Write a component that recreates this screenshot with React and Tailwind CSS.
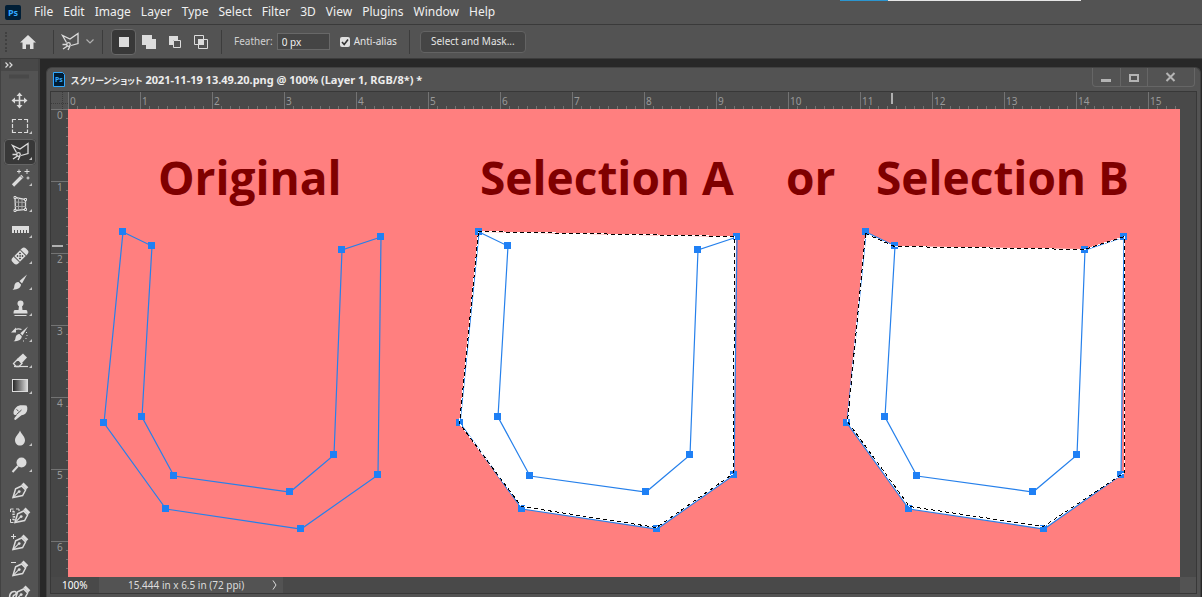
import React from 'react';

const UI_FONT = "font-['Noto_Sans','Open_Sans','Noto_Sans_CJK_JP',sans-serif]";

const MENUS = ['File', 'Edit', 'Image', 'Layer', 'Type', 'Select', 'Filter', '3D', 'View', 'Plugins', 'Window', 'Help'];

function LassoShape() {
  return (
    <g fill="none" stroke="#dcdcdc" strokeWidth="1.3">
      <path d="M12.5 13.500 8.500 6.500 16 10l8-5.500V14.500L17 16.500" />
      <circle cx="14.500" cy="15.500" r="1.800" />
      <path d="M13 15.500H8.500M13.500 17l-4.500 3M16 17l-2 4" />
    </g>
  );
}

function Pen({ x = 0, y = 0 }) {
  return (
    <g transform={`translate(${x} ${y})`}>
      <path d="M9 20.5l2.6-8.6 6-2.9 4 4-3 5.6z" fill="none" stroke="#dcdcdc" strokeWidth="1.5" />
      <path d="M9 20.5l5.6-5.6" stroke="#dcdcdc" strokeWidth="1.1" />
      <circle cx="15.2" cy="14.6" r="1.4" fill="#dcdcdc" />
      <path d="M17.4 7.8l2.2-2.2 4.7 4.6-2.2 2.4z" fill="#dcdcdc" />
    </g>
  );
}

const TOOLS = [
  {
    name: 'Move',
    icon: (
      <g>
        <path d="M15.500 8v11M10 13.500h11" stroke="#dcdcdc" strokeWidth="1.6" />
        <path d="M15.500 5.500l3 3.500h-6zM15.500 21.500l3-3.500h-6zM7.500 13.500l3.500-3v6zM23.500 13.500l-3.500-3v6z" fill="#dcdcdc" />
      </g>
    ),
  },
  {
    name: 'Rectangular Marquee',
    more: true,
    icon: <path d="M8.5 9.500V6.500h3.500M14 6.500h4M20 6.500h3.500V9.500M23.500 11v4M23.500 16.500v3H20M18 19.500h-4M12 19.500H8.500v-3M8.500 15v-4" fill="none" stroke="#dcdcdc" strokeWidth="1.2" />,
  },
  { name: 'Polygonal Lasso', more: true, active: true, icon: <LassoShape /> },
  {
    name: 'Magic Wand',
    more: true,
    icon: (
      <g>
        <path d="M9 20.500L18.500 11" stroke="#dcdcdc" strokeWidth="3.200" />
        <path d="M16.500 11l2.200 2.200" stroke="#535353" strokeWidth="0.800" />
        <path d="M15 4.500v4M13 6.500h4M23 4v5M20.500 6.500h5M24 11.500v3M22.500 13h3" stroke="#dcdcdc" />
      </g>
    ),
  },
  {
    name: 'Perspective Crop',
    more: true,
    icon: (
      <g fill="none" stroke="#dcdcdc">
        <path d="M11 6.500l10.500 2v10L11.500 19.500z" strokeWidth="1.300" />
        <path d="M14.500 7v12M18 8v11M11 11l10.500.5M11 15.500h10.500" stroke="#a5a5a5" />
        <path d="M10 5.500h2v2h-2zM20.500 7.500h2v2h-2zM10 18.500h2v2h-2zM20.500 17.500h2v2h-2z" fill="#535353" />
      </g>
    ),
  },
  { name: 'Ruler', more: true, icon: <path d="M8 9h17v7h-2v-3h-1v3h-2v-3h-1v3h-2v-3h-1v3h-2v-3h-1v3h-2v-3h-1v3H8z" fill="#dcdcdc" /> },
  {
    name: 'Healing Brush',
    more: true,
    icon: (
      <g transform="rotate(-45 16 13)">
        <rect x="6.500" y="9" width="19" height="8" rx="3" fill="#dcdcdc" />
        <path d="M11.500 9v8M20.500 9v8" stroke="#535353" />
        <path d="M13.500 10.500h1.500v1.500h-1.500zM17 10.500h1.500v1.500H17zM15.300 12.300h1.500v1.500h-1.500zM13.500 14h1.500v1.500h-1.500zM17 14h1.500v1.500H17z" fill="#333" />
      </g>
    ),
  },
  {
    name: 'Brush',
    more: true,
    icon: <path d="M23 5.500l-5 9-2.500-2.500zM14.500 13l2.500 2.500c0 3-3.500 5.500-8.500 5.200 2-1 1.500-2.500 2-4.700.5-2 2.300-3.200 4-3z" fill="#dcdcdc" />,
  },
  {
    name: 'Clone Stamp',
    more: true,
    icon: (
      <g fill="#dcdcdc">
        <circle cx="16.500" cy="8.500" r="3" />
        <path d="M15 10.500h3l.5 4.500H22c1 0 1.500 1 1.500 3.500h-14C9.500 16 10 15 11 15h3.500zM10.500 20h12v1h-12z" />
      </g>
    ),
  },
  {
    name: 'History Brush',
    more: true,
    icon: (
      <g fill="#dcdcdc">
        <path d="M24 5.500l-5.500 9-2.200-2.200zM15.500 13l2.300 2.300c0 3-3 5-8.300 5 2-1 1.700-2.300 2.200-4.300.4-1.800 2-3.200 3.800-3z" />
        <path d="M7 11.500L12 6.500v5z" />
        <path d="M11 8.500c3-1 4-1 6.500 0" fill="none" stroke="#dcdcdc" strokeWidth="1.300" />
        <path d="M22 11h1v1h-1zM22.500 14h1v1h-1zM21.500 17h1v1h-1zM19 19.500h1v1h-1z" />
      </g>
    ),
  },
  {
    name: 'Eraser',
    more: true,
    icon: (
      <g>
        <path d="M13.500 11.500L19 6.500l4 4-5.500 6z" fill="#dcdcdc" />
        <path d="M14 12l-4.500 4.500 2.500 3h3l3-3z" fill="none" stroke="#dcdcdc" strokeWidth="1.300" />
        <path d="M10 19.500h14" stroke="#dcdcdc" strokeWidth="1.200" />
      </g>
    ),
  },
  { name: 'Gradient', more: true, icon: <rect x="8.500" y="6.500" width="15" height="12" fill="url(#tool-gradient)" stroke="#dcdcdc" /> },
  {
    name: 'Smudge',
    icon: (
      <g>
        <path d="M12 8.500C15 5.500 18 6.500 22.500 6.500c1.500 2 1 6-1 8-1.500 1.500-2.500 1-4 1.800L11.500 21c-1.500 0-1.500-1.500-.8-2.200l2.300-3c-2 .8-3.500 0-3.500-1.800 0-2.500 1-4 2.500-5.500z" fill="#dcdcdc" />
        <path d="M12.500 15.500l5-4.500M14.500 12l-2-1.500" stroke="#535353" fill="none" />
      </g>
    ),
  },
  { name: 'Blur', more: true, icon: <path d="M16 5.500c1.500 4 5 6 5 9.700 0 3-2.200 5.300-5 5.300s-5-2.300-5-5.300c0-3.700 3.500-5.700 5-9.700z" fill="#dcdcdc" /> },
  {
    name: 'Dodge',
    more: true,
    icon: (
      <g>
        <circle cx="17.500" cy="11.500" r="5" fill="#dcdcdc" />
        <path d="M14 15l-5.500 6" stroke="#dcdcdc" strokeWidth="2" />
      </g>
    ),
  },
  { name: 'Pen', icon: <Pen /> },
  {
    name: 'Content-Aware Tracing',
    icon: (
      <g>
        <Pen x={2} y={-1} />
        <path d="M6.500 9V6h3M12 6h3v2M6.500 16v3.500h3" fill="none" stroke="#dcdcdc" />
        <path d="M10 8c-2 3 1.500 4-1 10" fill="none" stroke="#dcdcdc" strokeWidth="2.500" strokeDasharray="1.500 1.200" />
      </g>
    ),
  },
  {
    name: 'Add Anchor Point',
    icon: (
      <g>
        <Pen />
        <path d="M9.500 5v5M7 7.500h5" stroke="#dcdcdc" />
      </g>
    ),
  },
  {
    name: 'Delete Anchor Point',
    icon: (
      <g>
        <Pen />
        <path d="M7 7.500h5" stroke="#dcdcdc" />
      </g>
    ),
  },
  {
    name: 'Curvature Pen',
    icon: (
      <g>
        <Pen x={2} y={-1} />
        <path d="M7 20c-3-5-.5-10 4-9.500 2 .5 1.500 3-.5 3.500-2 .3-1.500 3-.5 5" fill="none" stroke="#dcdcdc" strokeWidth="1.600" />
      </g>
    ),
  },
];

function PsLogo({ doc }) {
  return doc ? (
    <svg viewBox="0 0 12 15" className="h-[15px] w-3 shrink-0" aria-label="Photoshop document">
      <path d="M.5.5h9l2 2v12H.5z" fill="#001e36" stroke="#31a8ff" />
      <text x="2" y="10" fill="#31a8ff" fontSize="7" fontWeight="700" fontFamily="Noto Sans, sans-serif">Ps</text>
    </svg>
  ) : (
    <svg viewBox="0 0 16 15" className="h-[15px] w-4 shrink-0" aria-label="Photoshop">
      <rect width="16" height="15" rx="2" fill="#001e36" />
      <text x="3" y="11" fill="#31a8ff" fontSize="9" fontWeight="700" fontFamily="Noto Sans, sans-serif">Ps</text>
    </svg>
  );
}

function MenuBar() {
  return (
    <nav className="relative flex h-[25px] shrink-0 items-center border-b border-[#3a3a3a] pl-[5px] text-xs text-[#f0f0f0]">
      <div className="absolute top-0 left-[840px] flex h-px w-[241px]">
        <span className="w-12 bg-[#2b95cf]" />
        <span className="flex-1 bg-[#e6e6e6]" />
      </div>
      <PsLogo />
      <div className="ml-2 flex">
        {MENUS.map((menu) => (
          <button key={menu} className="px-[5px] leading-5 whitespace-nowrap">{menu}</button>
        ))}
      </div>
    </nav>
  );
}

function Divider({ className }) {
  return <span className={`h-6 w-px shrink-0 bg-[#3c3c3c] ${className}`} />;
}

function OptionsBar() {
  return (
    <div className="flex h-[34px] shrink-0 items-center border-b border-[#3c3c3c] pl-[5px] text-[10px] text-[#e4e4e4]">
      <span className="h-5 w-0.5 border-l-2 border-dotted border-[#404040]" />
      <button className="ml-3 h-5 w-[18px]" aria-label="Home">
        <svg viewBox="0 0 18 20">
          <path d="M9 3l8 7.500h-2.500V17H11v-4.500H7V17H3.500v-6.500H1z" fill="#e0e0e0" />
        </svg>
      </button>
      <Divider className="ml-4" />
      <button className="flex items-center" aria-label="Polygonal Lasso presets">
        <svg viewBox="0 0 32 26" className="h-[26px] w-8">
          <LassoShape />
        </svg>
        <svg viewBox="0 0 8 5" className="h-[5px] w-2">
          <path d="M.5.5L4 4 7.500.5" fill="none" stroke="#b0b0b0" strokeWidth="1.200" />
        </svg>
      </button>
      <Divider className="mx-2" />
      <button className="flex h-[26px] w-[25px] items-center justify-center rounded-sm border border-[#686868] bg-[#383838]" aria-label="New selection">
        <span className="size-2.5 bg-[#dcdcdc]" />
      </button>
      <button className="ml-[5px] size-4" aria-label="Add to selection">
        <svg viewBox="0 0 16 16"><path d="M1 1h10v4h4v10H5v-4H1z" fill="#dcdcdc" /></svg>
      </button>
      <button className="ml-2.5 size-4" aria-label="Subtract from selection">
        <svg viewBox="0 0 16 16">
          <path d="M2 2h9v4H6v5H2z" fill="#dcdcdc" />
          <path d="M6.500 6.500h7v7h-7z" fill="none" stroke="#dcdcdc" />
        </svg>
      </button>
      <button className="ml-2.5 size-4" aria-label="Intersect with selection">
        <svg viewBox="0 0 16 16">
          <path d="M1.500 1.500h9v9h-9zM5.500 5.500h9v9h-9z" fill="none" stroke="#dcdcdc" />
          <path d="M5 5h6v6H5z" fill="#dcdcdc" />
        </svg>
      </button>
      <Divider className="mx-3" />
      <label className="flex items-center gap-1 text-[#d0d0d0]">
        Feather:
        <input type="text" defaultValue="0 px" className="h-[17px] w-[53px] border border-[#686868] bg-[#454545] px-1 text-[#f0f0f0] outline-none" />
      </label>
      <label className="ml-2.5 flex items-center gap-1 whitespace-nowrap">
        <span className="relative flex size-2.5">
          <input type="checkbox" defaultChecked className="size-2.5 appearance-none rounded-xs bg-[#e0e0e0]" />
          <svg viewBox="0 0 10 10" className="pointer-events-none absolute inset-0">
            <path d="M2 5l2.200 2.500L8 2.500" fill="none" stroke="#333" strokeWidth="1.600" />
          </svg>
        </span>
        Anti-alias
      </label>
      <Divider className="mr-2.5 ml-3" />
      <button className="h-[22px] w-[106px] rounded-sm border border-[#636363] bg-[#454545] whitespace-nowrap">Select and Mask...</button>
    </div>
  );
}

function Toolbox() {
  return (
    <aside className="flex w-10 shrink-0 flex-col overflow-hidden border-r-2 border-l border-[#424242] bg-[#535353]">
      <div className="h-3 shrink-0 bg-[#484848] pl-1">
        <svg viewBox="0 0 8 12" className="h-3 w-2">
          <path d="M.5 3.500L3 6 .5 8.500M4.500 3.500L7 6 4.500 8.500" fill="none" stroke="#dcdcdc" strokeWidth="1.200" />
        </svg>
      </div>
      <svg viewBox="0 0 36 16" className="h-4 shrink-0">
        <path d="M8 5.500h20" stroke="#404040" strokeWidth="4" strokeDasharray="1 1" />
      </svg>
      {TOOLS.map((tool) => (
        <button
          key={tool.name}
          aria-label={tool.name}
          className={`ml-[3px] h-[26px] w-8 shrink-0 rounded-sm ${tool.active ? 'bg-[#383838] outline -outline-offset-1 outline-[#656565]' : ''}`}
        >
          <svg viewBox="0 0 32 26" className="h-[26px] w-8">
            <defs>
              <linearGradient id="tool-gradient">
                <stop offset="0" stopColor="#222" />
                <stop offset="1" stopColor="#ddd" />
              </linearGradient>
            </defs>
            {tool.icon}
            {tool.more && <path d="M28 18v3h-3z" fill="#c4c4c4" />}
          </svg>
        </button>
      ))}
    </aside>
  );
}

// 72 px per inch, a tick every eighth
const INCH = 72;
const EIGHTH = 9;

function HorizontalRuler() {
  const ticks = Array.from({ length: 124 }, (_, i) => i);
  return (
    <svg className="h-[17px] min-w-0 flex-1" aria-label="Horizontal ruler">
      {ticks.map((i) => (
        <path key={i} d={`M${i * EIGHTH + 0.5} ${i % 8 ? 14 : 0}V17`} stroke="#737373" />
      ))}
      {ticks.filter((i) => i % 8 === 0).map((i) => (
        <text key={i} x={(i / 8) * INCH + 2} y="13" fontSize="10" fill="#999">{i / 8}</text>
      ))}
      <path d="M824 1v11" stroke="#b0b0b0" strokeWidth="2" />
    </svg>
  );
}

function VerticalRuler() {
  const ticks = Array.from({ length: 52 }, (_, i) => i);
  return (
    <svg className="h-full w-[17px] shrink-0 bg-[#464646]" aria-label="Vertical ruler">
      {ticks.map((i) => (
        <path key={i} d={`M${i % 8 ? 15 : 0} ${i * EIGHTH + 0.5}H17`} stroke="#737373" />
      ))}
      {ticks.filter((i) => i % 8 === 0).map((i) => (
        <text key={i} x="6" y={(i / 8) * INCH + 10} fontSize="10" fill="#999">{i / 8}</text>
      ))}
      <path d="M1 137h11" stroke="#b0b0b0" strokeWidth="2" />
    </svg>
  );
}

const PATH_POINTS = [
  [55, 123], [84, 137], [74, 308], [106, 367], [222, 383], [266, 346],
  [274, 141], [313, 128], [310, 366], [233, 420], [98, 400], [36, 314],
];

function UPath({ x = 0 }) {
  return (
    <g transform={`translate(${x} 0)`}>
      <polygon points={PATH_POINTS.join(' ')} fill="none" stroke="#2680eb" strokeWidth="1.200" />
      {PATH_POINTS.map(([px, py]) => (
        <rect key={`${px}-${py}`} x={px - 4} y={py - 4} width="7" height="7" fill="#1f80f5" />
      ))}
    </g>
  );
}

function Ants({ points }) {
  return (
    <g fill="none" shapeRendering="crispEdges">
      <polygon points={points} stroke="#fff" />
      <polygon points={points} stroke="#000" strokeDasharray="4 3" />
    </g>
  );
}

function Artwork() {
  return (
    <svg className="h-full w-full" aria-label="Artwork">
      <g fill="#7f0000" fontSize="46" fontWeight="700" fontFamily="Open Sans, Noto Sans, sans-serif">
        <text x="90" y="86">Original</text>
        <text x="412" y="86">Selection A</text>
        <text x="718" y="86">or</text>
        <text x="808" y="86">Selection B</text>
      </g>
      <polygon points="411,123 668,128 666,366 589,420 454,400 392,314" fill="#fff" />
      <polygon points="798,123 827,137 1017,140 1056,128 1053,366 976,420 841,400 779,314" fill="#fff" />
      <UPath />
      <UPath x={356} />
      <UPath x={743} />
      <Ants points="410.500,122.500 666.500,127.500 665.500,364.500 588.500,418.500 453.500,397.500 391.500,314.500" />
      <Ants points="797.500,124.500 826.500,137.500 1016.500,140.500 1056.500,127.500 1056.500,363.500 975.500,417.500 841.500,397.500 779.500,312.500" />
    </svg>
  );
}

function DocumentWindow() {
  return (
    <section className="mt-2 mr-px ml-1.5 flex min-w-0 flex-1 flex-col rounded-t-md border-x border-t border-[#424242] bg-[#535353] px-[3px] pb-[3px]">
      <header className="flex h-[23px] shrink-0 items-center pl-[3px]">
        <PsLogo doc />
        <h1 className="ml-1.5 flex-1 truncate pt-px text-[11px] font-bold text-[#ececec]">
          <span className="text-[9px] [font-feature-settings:'palt']">スクリーンショット</span>
          {' 2021-11-19 13.49.20.png @ 100% (Layer 1, RGB/8*) *'}
        </h1>
        <div className="mr-0.5 flex h-[19px] self-start rounded-b-sm border-x border-b border-[#666]">
          <button className="w-[27px]" aria-label="Minimize">
            <svg viewBox="0 0 27 18"><path d="M8 12.500h10" stroke="#b4b4b4" strokeWidth="3" /></svg>
          </button>
          <button className="w-7 border-x border-[#666]" aria-label="Maximize">
            <svg viewBox="0 0 26 18"><path d="M9 7h8v6H9z" fill="none" stroke="#b4b4b4" strokeWidth="2" /></svg>
          </button>
          <button className="w-[46px]" aria-label="Close">
            <svg viewBox="0 0 46 18"><path d="M18.500 5l8 8M26.500 5l-8 8" stroke="#b4b4b4" strokeWidth="2" /></svg>
          </button>
        </div>
      </header>
      <div className="flex min-h-0 flex-1 flex-col border border-[#383838] bg-[#494949]">
        <div className="flex shrink-0">
          <svg viewBox="0 0 17 17" className="size-[17px] shrink-0 bg-[#535353]">
            <path d="M11.500 0v17M0 11.500h17" stroke="#3c3c3c" strokeDasharray="1 1" />
          </svg>
          <HorizontalRuler />
          <span className="w-4 shrink-0" />
        </div>
        <div className="flex min-h-0 flex-1">
          <VerticalRuler />
          <main className="min-w-0 flex-1 overflow-hidden bg-[#ff7f7f]">
            <Artwork />
          </main>
          <span className="w-4 shrink-0" />
        </div>
        <footer className="flex h-4 shrink-0 items-center text-[10px] leading-4 text-[#dcdcdc]">
          <span className="w-12 pl-[11px] text-white">100%</span>
          <button className="flex h-4 w-[184px] items-center justify-between bg-[#535353] pr-1.5 pl-[29px]">
            15.444 in x 6.5 in (72 ppi)
            <svg viewBox="0 0 5 10" className="h-2.5 w-[5px]">
              <path d="M1 .5L4 5 1 9.500" fill="none" stroke="#dcdcdc" />
            </svg>
          </button>
          <span className="ml-auto h-4 w-4 bg-[#535353]" />
        </footer>
      </div>
    </section>
  );
}

export default function App() {
  return (
    <div className={`flex h-screen flex-col overflow-hidden bg-[#535353] ${UI_FONT}`}>
      <MenuBar />
      <OptionsBar />
      <div className="flex min-h-0 flex-1 bg-[#282828]">
        <Toolbox />
        <DocumentWindow />
      </div>
    </div>
  );
}
